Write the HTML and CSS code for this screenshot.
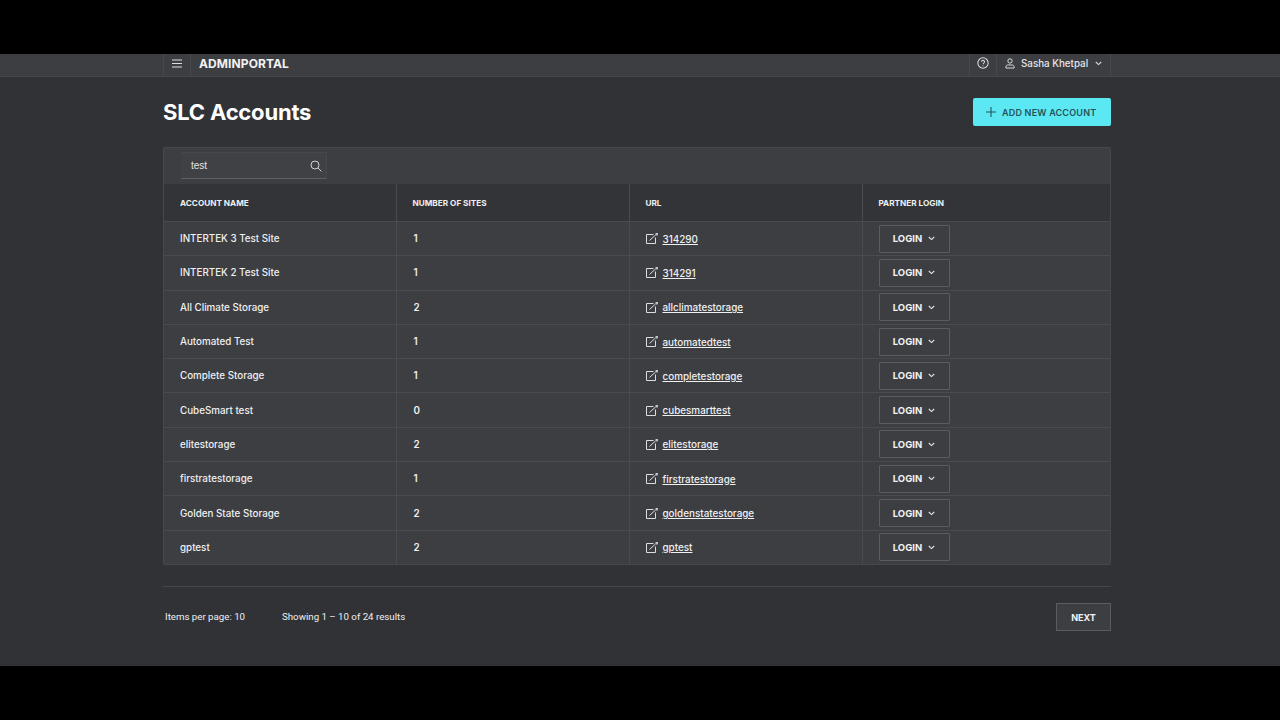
FILE: index.html
```html
<!DOCTYPE html>
<html lang="en">
<head>
  <meta charset="UTF-8">
  <title>SLC Accounts</title>
  <link rel="stylesheet" href="styles.css">
</head>
<body>
  <div class="screen">
    <header class="topbar">
      <div class="topbar-inner">
        <div class="menu-btn">
          <svg width="10" height="9" viewBox="0 0 10 9" fill="none" stroke="#dcddde" stroke-width="1.1"><path d="M0 1h10M0 4.5h10M0 8h10"/></svg>
        </div>
        <div class="brand">ADMINPORTAL</div>
        <div class="help-btn">
          <svg width="12" height="12" viewBox="0 0 13 13" fill="none" stroke="#e0e1e2" stroke-width="1.1"><circle cx="6.5" cy="6.5" r="5.6"/><path d="M4.9 5.2a1.6 1.6 0 1 1 2.4 1.4c-.5.3-.8.6-.8 1.2"/><path d="M6.5 9.1v1"/></svg>
        </div>
        <div class="user-btn">
          <svg width="10" height="11" viewBox="0 0 11 12" fill="none" stroke="#d8d9da" stroke-width="1.1"><circle cx="5.5" cy="3.2" r="2.4"/><path d="M1 11V9.6C1 8.4 2 7.6 3 7.6h5c1 0 2 .8 2 2V11z"/></svg>
          <span>Sasha Khetpal</span>
          <svg class="chev" width="7" height="5" viewBox="0 0 7 5" fill="none" stroke="#d8d9da" stroke-width="1.1"><path d="M.8 1l2.7 2.6L6.2 1"/></svg>
        </div>
      </div>
    </header>

    <main class="content">
      <div class="title-row">
        <h1>SLC Accounts</h1>
        <button class="add-btn">
          <svg width="10" height="10" viewBox="0 0 10 10" fill="none" stroke="#27525a" stroke-width="1.1"><path d="M5 0v10M0 5h10"/></svg>
          ADD NEW ACCOUNT
        </button>
      </div>

      <div class="panel">
        <div class="search-row">
          <div class="search">
            <span>test</span>
            <svg width="12" height="12" viewBox="0 0 12 12" fill="none" stroke="#d0d1d2" stroke-width="1"><circle cx="5" cy="5" r="4"/><path d="M8 8l3.4 3.4"/></svg>
          </div>
        </div>

        <div class="row head">
          <div class="cell">ACCOUNT NAME</div>
          <div class="cell">NUMBER OF SITES</div>
          <div class="cell">URL</div>
          <div class="cell">PARTNER LOGIN</div>
        </div>

        <div id="rows"></div>
      </div>

      <div class="footer">
        <span class="per-page">Items per page: 10</span>
        <span class="showing">Showing 1 – 10 of 24 results</span>
        <button class="next-btn">NEXT</button>
      </div>
    </main>
  </div>

  <script>
    const accounts = [
      ["INTERTEK 3 Test Site", 1, "314290"],
      ["INTERTEK 2 Test Site", 1, "314291"],
      ["All Climate Storage", 2, "allclimatestorage"],
      ["Automated Test", 1, "automatedtest"],
      ["Complete Storage", 1, "completestorage"],
      ["CubeSmart test", 0, "cubesmarttest"],
      ["elitestorage", 2, "elitestorage"],
      ["firstratestorage", 1, "firstratestorage"],
      ["Golden State Storage", 2, "goldenstatestorage"],
      ["gptest", 2, "gptest"]
    ];

    const linkIcon = `<svg width="12" height="11" viewBox="0 0 12 11" fill="none" stroke="#dcddde" stroke-width="1"><path d="M7.5 1.5H.5v9h9V4.5"/><path d="M3.5 7.5L9.5 2"/><rect x="10" y=".5" width="1.5" height="1.5" stroke-width=".8"/></svg>`;
    const chevron = `<svg width="7" height="5" viewBox="0 0 7 5" fill="none" stroke="#e4e5e6" stroke-width="1.1"><path d="M.8 1l2.7 2.6L6.2 1"/></svg>`;

    document.getElementById("rows").innerHTML = accounts.map(a => `
      <div class="row">
        <div class="cell name">${a[0]}</div>
        <div class="cell sites">${a[1]}</div>
        <div class="cell url">${linkIcon}<a href="#">${a[2]}</a></div>
        <div class="cell"><button class="login-btn">LOGIN ${chevron}</button></div>
      </div>
    `).join("");
  </script>
</body>
</html>
```

FILE: styles.css
```css
* {
  box-sizing: border-box;
}

body {
  margin: 0;
  background-color: #000;
  font-family: 'Inter', 'Liberation Sans', sans-serif;
  color: #f2f2f3;
}

.screen {
  margin-top: 54px;
  height: 612px;
  background-color: #303236;
}

.topbar {
  height: 23px;
  background-color: #3c3e42;
  border-bottom: 1px solid #44464a;
}

.topbar-inner {
  width: 948px;
  height: 22px;
  margin-left: 163px;
  display: flex;
  align-items: center;
}

.topbar-inner > * {
  padding-bottom: 4px;
}

.menu-btn {
  width: 28px;
  height: 100%;
  display: flex;
  align-items: center;
  justify-content: center;
  border-left: 1px solid #47494d;
  border-right: 1px solid #47494d;
}

.brand {
  margin-left: 8px;
  font-size: 12px;
  font-weight: 700;
  letter-spacing: 0.1px;
  flex: 1;
}

.help-btn {
  width: 27px;
  height: 100%;
  display: flex;
  align-items: center;
  justify-content: center;
  border-left: 1px solid #47494d;
}

.user-btn {
  width: 115px;
  height: 100%;
  padding-left: 8px;
  display: flex;
  align-items: center;
  border-left: 1px solid #47494d;
  border-right: 1px solid #47494d;
  font-size: 9.8px;
  font-weight: 500;
  color: #e6e6e7;
}

.user-btn span {
  margin-left: 6px;
}

.user-btn .chev {
  margin-left: 7px;
}

.content {
  width: 948px;
  margin-left: 163px;
}

.title-row {
  height: 70px;
  display: flex;
  align-items: center;
  justify-content: space-between;
}

h1 {
  margin: 0;
  font-size: 22px;
  font-weight: 700;
  letter-spacing: -0.2px;
  color: #fff;
}

.add-btn {
  width: 138px;
  height: 28px;
  padding: 0 0 0 13px;
  display: flex;
  align-items: center;
  gap: 6px;
  background-color: #5ce8f2;
  color: #27525a;
  border: none;
  border-radius: 2px;
  font-family: inherit;
  font-size: 9px;
  font-weight: 600;
  letter-spacing: 0.2px;
}

.panel {
  background-color: #3c3e42;
  border: 1px solid #45474b;
  border-radius: 2px;
}

.search-row {
  height: 36px;
  padding: 4px 0 0 17px;
}

.search {
  width: 146px;
  height: 27px;
  padding: 0 4px 0 10px;
  display: flex;
  align-items: center;
  justify-content: space-between;
  background-color: #3f4145;
  border-top: 1px solid #46484c;
  border-right: 1px solid #46484c;
  border-bottom: 1px solid #5d5f63;
  font-family: 'Liberation Sans', sans-serif;
  font-size: 10px;
  color: #e4e5e6;
}

.row {
  display: grid;
  grid-template-columns: 231.5px 233px 233px 1fr;
  height: 34.3px;
  border-top: 1px solid #494b4f;
}

.row.head {
  height: 37px;
  background-color: #323438;
  border-top: none;
}

.cell {
  display: flex;
  align-items: center;
  padding-left: 16px;
  border-left: 1px solid #494b4f;
  font-size: 9.8px;
  font-weight: 500;
  color: #f0f0f1;
}

.cell:first-child {
  border-left: none;
}

.row.head .cell {
  font-size: 8.2px;
  font-weight: 700;
}

.sites {
  padding-left: 17px;
  font-weight: 600;
}

.url svg {
  margin-right: 5px;
}

.url a {
  font-size: 9.9px;
  font-weight: 500;
  color: #f0f0f1;
  text-decoration: underline;
}

.login-btn {
  width: 71px;
  height: 28px;
  display: flex;
  align-items: center;
  justify-content: center;
  gap: 6px;
  background: transparent;
  border: 1px solid #5a5c60;
  border-radius: 1px;
  color: #f2f2f3;
  font-family: inherit;
  font-size: 9.5px;
  font-weight: 700;
}

.footer {
  margin-top: 21px;
  height: 45px;
  padding: 16px 0 0 2px;
  display: flex;
  align-items: center;
  border-top: 1px solid #45474b;
  font-family: 'Roboto', sans-serif;
  font-size: 9.7px;
  color: #f0f0f1;
}

.showing {
  margin-left: 37px;
}

.next-btn {
  width: 55px;
  height: 28px;
  margin-left: auto;
  padding-top: 2px;
  background-color: #3c3e42;
  border: 1px solid #5a5c60;
  color: #f2f2f3;
  font-family: 'Inter', sans-serif;
  font-size: 9px;
  font-weight: 700;
}
```
